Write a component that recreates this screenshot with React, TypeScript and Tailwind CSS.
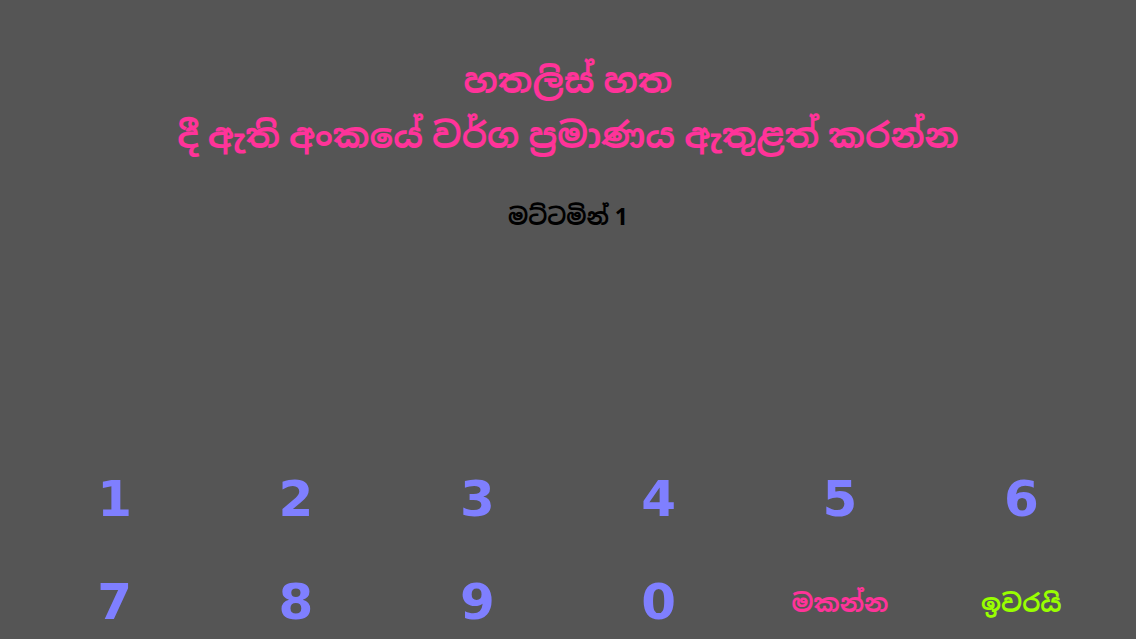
export default function App() {
  const keys: { label: string; color: string; sinhala?: boolean }[] = [
    { label: "1", color: "text-[#7f7fff]" },
    { label: "2", color: "text-[#7f7fff]" },
    { label: "3", color: "text-[#7f7fff]" },
    { label: "4", color: "text-[#7f7fff]" },
    { label: "5", color: "text-[#7f7fff]" },
    { label: "6", color: "text-[#7f7fff]" },
    { label: "7", color: "text-[#7f7fff]" },
    { label: "8", color: "text-[#7f7fff]" },
    { label: "9", color: "text-[#7f7fff]" },
    { label: "0", color: "text-[#7f7fff]" },
    { label: "මකන්න", color: "text-[#ff3399]", sinhala: true },
    { label: "ඉවරයි", color: "text-[#99ff00]", sinhala: true },
  ];
  return (
    <div className="w-[1136px] h-[639px] bg-[#555555] flex flex-col items-center overflow-hidden font-['Noto_Sans','Noto_Sans_Sinhala',sans-serif]">
      <div className="mt-[52px] flex flex-col items-center text-[#ff3399] text-[35px] font-bold leading-[55px]">
        <div>හතලිස් හත</div>
        <div>දී ඇති අංකයේ වර්ග ප්‍රමාණය ඇතුළත් කරන්න</div>
      </div>
      <div className="mt-[34px] text-black text-[23px] font-bold leading-[40px]">මට්ටමින් 1</div>
      <div className="mt-auto mb-[-15px] w-full px-6 grid grid-cols-6">
        {keys.map((k) => (
          <div
            key={k.label}
            className={`h-[103px] flex items-center justify-center font-bold ${k.color} ${
              k.sinhala ? "text-[25px]" : "text-[50px] font-['DejaVu_Sans',sans-serif]"
            }`}
          >
            {k.label}
          </div>
        ))}
      </div>
    </div>
  );
}
